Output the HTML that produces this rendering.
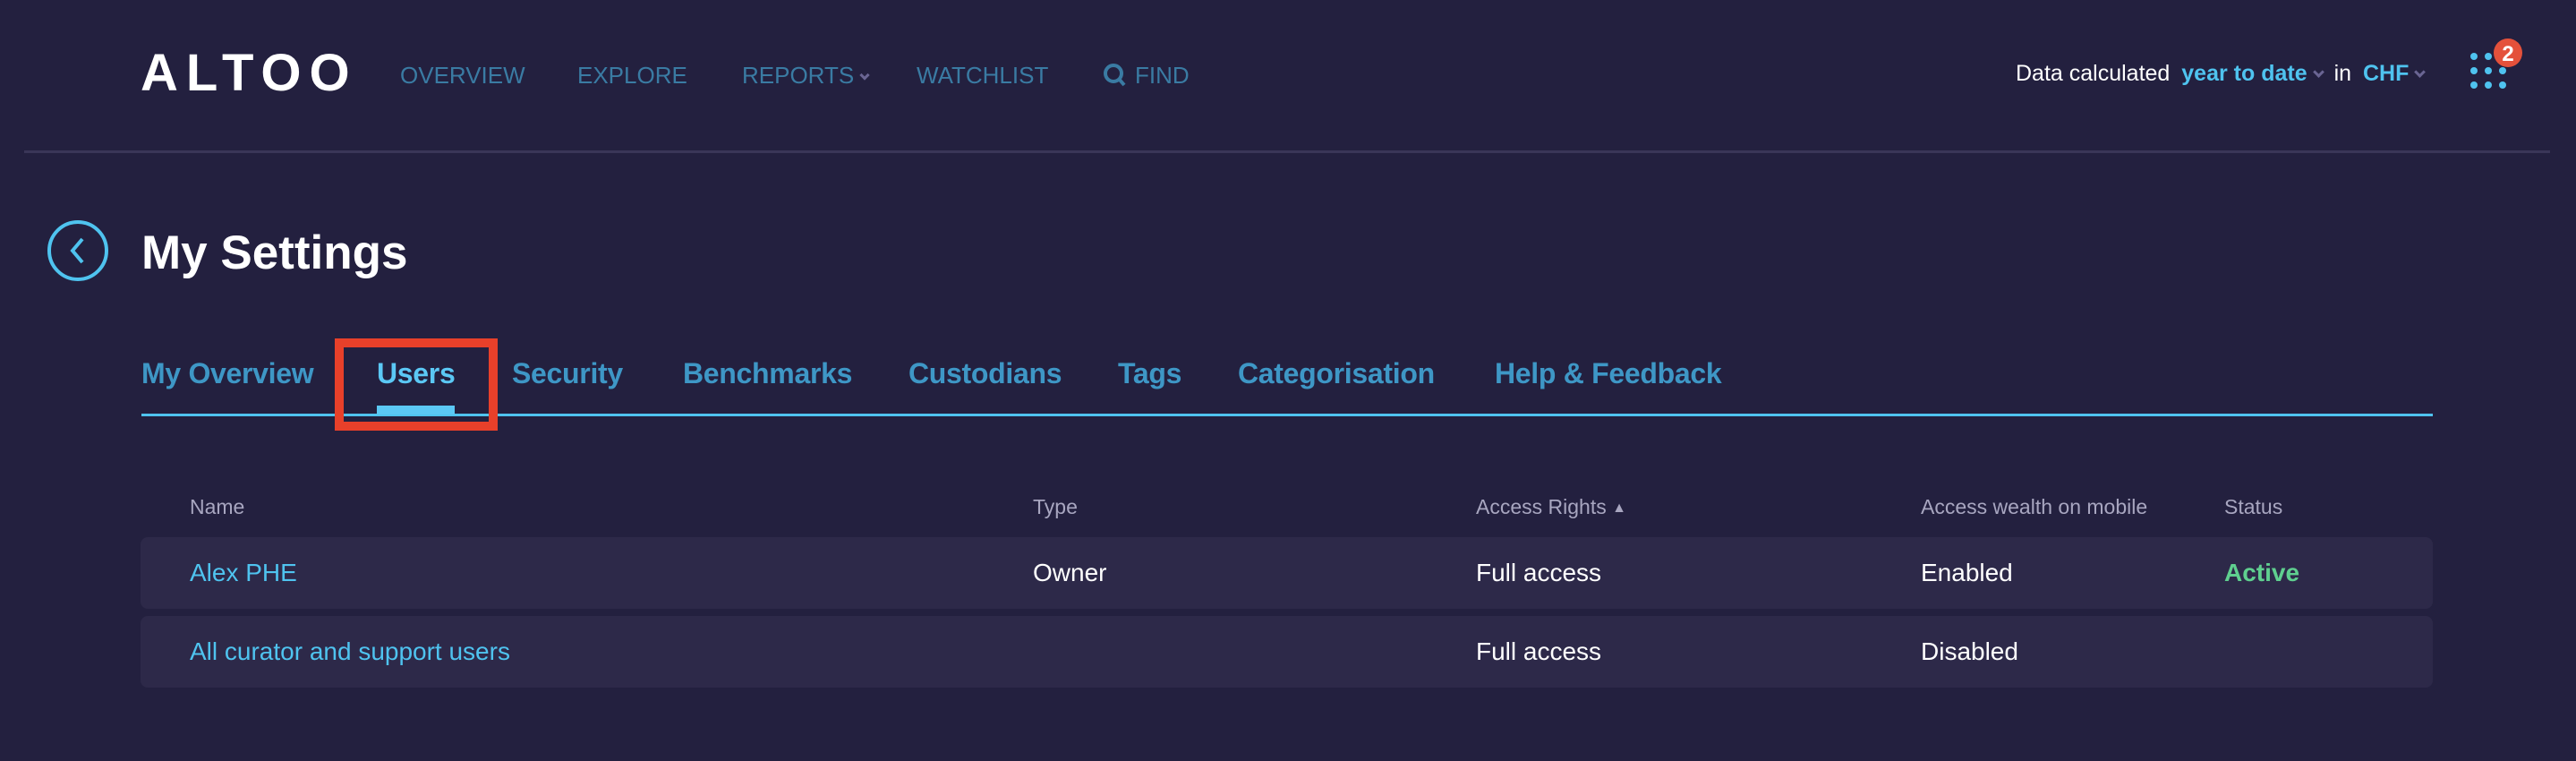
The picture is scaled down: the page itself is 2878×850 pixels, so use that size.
<!DOCTYPE html>
<html><head><meta charset="utf-8"><style>
*{margin:0;padding:0;box-sizing:border-box}
body{width:2878px;height:850px;background:#23203f;font-family:"Liberation Sans",sans-serif;position:relative;overflow:hidden}
.a{position:absolute;white-space:nowrap;line-height:1}
.nav{font-size:26px;color:#3a7ba3;top:71px}
.tab{font-size:32px;font-weight:bold;color:#3e97c6;top:401px;letter-spacing:-0.3px}
.th{font-size:23px;color:#a8a6c0;top:555px}
.td{font-size:28px;color:#fff}
.row{position:absolute;left:157px;width:2561px;height:80px;background:#2d2949;border-radius:8px}
.chev{display:inline-block;width:9px;height:9px;border-right:3px solid #6a6593;border-bottom:3px solid #6a6593;transform:rotate(45deg);margin-left:8px;position:relative;top:-5px}
</style></head><body>
<div class="a" style="left:157px;top:53px;font-size:58px;color:#fff;letter-spacing:9px;font-weight:600">ALTOO</div>
<div class="a nav" style="left:447px">OVERVIEW</div>
<div class="a nav" style="left:645px">EXPLORE</div>
<div class="a nav" style="left:829px">REPORTS<span class="chev" style="width:8px;height:8px"></span></div>
<div class="a nav" style="left:1024px">WATCHLIST</div>
<svg class="a" style="left:1232px;top:70px" width="28" height="30" viewBox="0 0 28 30"><circle cx="12" cy="12" r="9" fill="none" stroke="#3a7ba3" stroke-width="4"/><path d="M18 18l6 7" stroke="#3a7ba3" stroke-width="4"/></svg>
<div class="a nav" style="left:1268px">FIND</div>

<div class="a" style="left:2252px;top:70px;font-size:25px;color:#fff">Data calculated <span style="color:#4fc3ef;font-weight:bold;margin-left:6px">year to date</span><span class="chev"></span> <span style="margin-left:6px">in</span> <span style="color:#4fc3ef;font-weight:bold;margin-left:6px">CHF</span><span class="chev"></span></div>
<svg class="a" style="left:2755px;top:35px" width="80" height="70" viewBox="0 0 80 70">
<g fill="#4fc3ef"><circle cx="9" cy="28" r="4"/><circle cx="25" cy="28" r="4"/><circle cx="9" cy="44" r="4"/><circle cx="25" cy="44" r="4"/><circle cx="41" cy="44" r="4"/><circle cx="9" cy="60" r="4"/><circle cx="25" cy="60" r="4"/><circle cx="41" cy="60" r="4"/></g>
<circle cx="47" cy="24" r="16" fill="#e4513b"/><text x="47" y="33" font-size="24" font-weight="bold" fill="#fff" text-anchor="middle" font-family="Liberation Sans">2</text></svg>

<div class="a" style="left:27px;top:168px;width:2822px;height:3px;background:#3a3658"></div>

<svg class="a" style="left:52px;top:245px" width="70" height="70" viewBox="0 0 70 70"><circle cx="35" cy="35" r="32" fill="none" stroke="#4fc3ef" stroke-width="4"/><path d="M40 22L29 35l11 13" fill="none" stroke="#4fc3ef" stroke-width="4"/></svg>
<div class="a" style="left:158px;top:256px;font-size:53px;font-weight:bold;color:#fff">My Settings</div>

<div class="a tab" style="left:158px">My Overview</div>
<div class="a tab" style="left:421px;color:#5bc8f5">Users</div>
<div class="a tab" style="left:572px">Security</div>
<div class="a tab" style="left:763px">Benchmarks</div>
<div class="a tab" style="left:1015px">Custodians</div>
<div class="a tab" style="left:1249px">Tags</div>
<div class="a tab" style="left:1383px">Categorisation</div>
<div class="a tab" style="left:1670px">Help &amp; Feedback</div>
<div class="a" style="left:158px;top:462px;width:2560px;height:3px;background:#4fc3ef"></div>
<div class="a" style="left:421px;top:453px;width:87px;height:10px;background:#5bc8f5"></div>
<div class="a" style="left:374px;top:378px;width:182px;height:103px;border:10px solid #e8402a"></div>

<div class="a th" style="left:212px">Name</div>
<div class="a th" style="left:1154px">Type</div>
<div class="a th" style="left:1649px">Access Rights <span style="font-size:16px;position:relative;top:-2px">&#9650;</span></div>
<div class="a th" style="left:2146px">Access wealth on mobile</div>
<div class="a th" style="left:2485px">Status</div>

<div class="row" style="top:600px"></div>
<div class="row" style="top:688px"></div>
<div class="a td" style="left:212px;top:626px;color:#4fc3ef">Alex PHE</div>
<div class="a td" style="left:1154px;top:626px">Owner</div>
<div class="a td" style="left:1649px;top:626px">Full access</div>
<div class="a td" style="left:2146px;top:626px">Enabled</div>
<div class="a td" style="left:2485px;top:626px;color:#5fcf8f;font-weight:bold">Active</div>
<div class="a td" style="left:212px;top:714px;color:#4fc3ef">All curator and support users</div>
<div class="a td" style="left:1649px;top:714px">Full access</div>
<div class="a td" style="left:2146px;top:714px">Disabled</div>
</body></html>
